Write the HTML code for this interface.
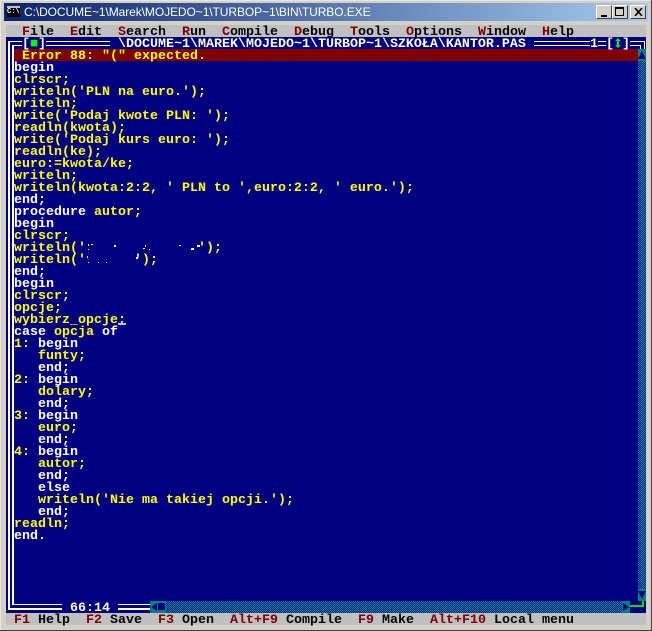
<!DOCTYPE html>
<html><head><meta charset="utf-8"><style>
html,body{margin:0;padding:0;background:#d4d0c8}
body{width:652px;height:631px;position:relative;overflow:hidden}
.a{position:absolute}
pre{position:absolute;margin:0;font:bold 13.34px/12px "Liberation Mono",monospace;white-space:pre;height:12px;transform:translateY(2px)}
#code{left:14px;top:61px;color:#ff0;height:auto}
#code b{color:#fff;font-weight:bold}
i{font-style:normal;color:#800000}
.l{position:absolute;background:#fff}
.btn{position:absolute;top:5px;width:16px;height:14px;background:#d4d0c8;box-sizing:border-box;border:1px solid;border-color:#fff #404040 #404040 #fff}
</style></head><body>
<div class="a" style="left:0;top:0;width:652px;height:631px;background:#d4d0c8"></div>
<div class="a" style="left:0;top:0;width:652px;height:1px;background:#e8e6e0"></div>
<div class="a" style="left:0;top:0;width:1px;height:631px;background:#e8e6e0"></div>
<div class="a" style="left:651px;top:0;width:1px;height:631px;background:#404040"></div>
<div class="a" style="left:0;top:630px;width:652px;height:1px;background:#404040"></div>
<div class="a" style="left:4px;top:3px;width:644px;height:18px;background:linear-gradient(90deg,#0a246a,#a6caf0)"></div>
<div class="a" style="left:7px;top:6px;width:13px;height:11px;background:#000;border-top:2px solid #c0c0c0;box-sizing:border-box;color:#fff;font:bold 7px/8px 'Liberation Mono',monospace;overflow:hidden">C:\</div>
<div class="a" style="left:24px;top:4px;color:#fff;font:12px/16px 'Liberation Sans',sans-serif;white-space:pre;letter-spacing:-0.08px">C:\DOCUME~1\Marek\MOJEDO~1\TURBOP~1\BIN\TURBO.EXE</div>
<div class="btn" style="left:596px"><div class="a" style="left:4px;top:9px;width:6px;height:2px;background:#000"></div></div>
<div class="btn" style="left:612px"><div class="a" style="left:2px;top:1px;width:9px;height:9px;border:1px solid #000;border-top-width:2px;box-sizing:border-box"></div></div>
<div class="btn" style="left:630px"><svg class="a" style="left:3px;top:2px" width="9" height="8"><path d="M1 0L8 8M8 0L1 8" stroke="#000" stroke-width="1.6"/></svg></div>

<div class="a" style="left:6px;top:25px;width:640px;height:12px;background:#c0c0c0"></div>
<pre style="left:6px;top:25px;color:#000">  <i>F</i>ile  <i>E</i>dit  <i>S</i>earch  <i>R</i>un  <i>C</i>ompile  <i>D</i>ebug  <i>T</i>ools  <i>O</i>ptions  <i>W</i>indow  <i>H</i>elp</pre>

<div class="a" style="left:6px;top:37px;width:640px;height:576px;background:#000080"></div>
<div class="a" style="left:14px;top:49px;width:624px;height:12px;background:#800000"></div>
<pre style="left:22px;top:49px;color:#ff0">Error 88: "(" expected.</pre>

<!-- frame -->
<div class="l" style="left:8px;top:41px;width:14px;height:1px"></div>
<div class="l" style="left:12px;top:45px;width:10px;height:1px"></div>
<div class="l" style="left:46px;top:41px;width:64px;height:1px"></div>
<div class="l" style="left:46px;top:45px;width:64px;height:1px"></div>
<div class="l" style="left:534px;top:41px;width:56px;height:1px"></div>
<div class="l" style="left:534px;top:45px;width:56px;height:1px"></div>
<div class="l" style="left:598px;top:41px;width:8px;height:1px"></div>
<div class="l" style="left:598px;top:45px;width:8px;height:1px"></div>
<div class="l" style="left:630px;top:41px;width:15px;height:1px"></div>
<div class="l" style="left:630px;top:45px;width:11px;height:1px"></div>
<div class="l" style="left:640px;top:45px;width:1px;height:4px"></div>
<div class="l" style="left:644px;top:41px;width:1px;height:8px"></div>
<div class="l" style="left:8px;top:41px;width:2px;height:568px"></div>
<div class="l" style="left:12px;top:45px;width:2px;height:559px"></div>
<div class="l" style="left:8px;top:608px;width:54px;height:2px"></div>
<div class="l" style="left:12px;top:604px;width:50px;height:1px"></div>
<div class="l" style="left:118px;top:604px;width:32px;height:1px"></div>
<div class="l" style="left:118px;top:608px;width:32px;height:2px"></div>
<pre style="left:22px;top:37px;color:#fff">[<span style="color:#0f0">■</span>]</pre>
<pre style="left:118px;top:37px;color:#fff">\DOCUME~1\MAREK\MOJEDO~1\TURBOP~1\SZKOŁA\KANTOR.PAS</pre>
<pre style="left:590px;top:37px;color:#fff">1</pre>
<pre style="left:606px;top:37px;color:#fff">[ ]</pre>
<svg class="a" style="left:614px;top:37px" width="8" height="12"><path d="M4 1L7 4H5V8H7L4 11L1 8H3V4H1Z" fill="#00e040"/></svg>
<pre style="left:70px;top:601px;color:#fff">66:14</pre>

<!-- scrollbars -->
<svg class="a" style="left:0;top:0" width="652" height="631" shape-rendering="crispEdges">
<defs><pattern id="p" width="2" height="2" patternUnits="userSpaceOnUse"><rect width="2" height="2" fill="#002090"/><rect width="1" height="1" fill="#008090"/><rect x="1" y="1" width="1" height="1" fill="#008090"/></pattern></defs>
<rect x="638" y="49" width="8" height="552" fill="url(#p)"/>
<rect x="150" y="601" width="480" height="12" fill="url(#p)"/>
</svg>
<div class="a" style="left:638px;top:49px;width:8px;height:12px;background:#008080"></div>
<svg class="a" style="left:638px;top:49px" width="8" height="12"><path d="M4 2L8 10H0Z" fill="#000080"/></svg>
<div class="a" style="left:638px;top:589px;width:8px;height:12px;background:#008080"></div>
<svg class="a" style="left:638px;top:589px" width="8" height="12"><path d="M0 2H8L4 10Z" fill="#000080"/></svg>
<div class="a" style="left:150px;top:601px;width:16px;height:12px;background:#008080"></div>
<svg class="a" style="left:150px;top:601px" width="8" height="12"><path d="M7 2V10L1 6Z" fill="#000080"/></svg>
<div class="a" style="left:158px;top:603px;width:7px;height:7px;background:#000080"></div>
<div class="a" style="left:622px;top:601px;width:8px;height:12px;background:#008080"></div>
<svg class="a" style="left:622px;top:601px" width="8" height="12"><path d="M1 2V10L7 6Z" fill="#000080"/></svg>
<div class="a" style="left:630px;top:601px;width:16px;height:12px;background:#000080"></div>
<div class="a" style="left:630px;top:605px;width:14px;height:2px;background:#00e000"></div>
<div class="a" style="left:642px;top:601px;width:2px;height:6px;background:#00e000"></div>

<pre id="code" style="height:auto"><b>begin</b>
clrscr;
writeln('PLN na euro.');
writeln;
write('Podaj kwote PLN: ');
readln(kwota);
write('Podaj kurs euro: ');
readln(ke);
euro:=kwota/ke;
writeln;
writeln(kwota:2:2, ' PLN to ',euro:2:2, ' euro.');
<b>end;</b>
<b>procedure</b> autor;
<b>begin</b>
clrscr;
writeln('              ');
writeln('      ');
<b>end;</b>
<b>begin</b>
clrscr;
opcje;
wybierz_opcje;
<b>case</b> opcja <b>of</b>
1: <b>begin</b>
   funty;
   <b>end;</b>
2: <b>begin</b>
   dolary;
   <b>end;</b>
3: <b>begin</b>
   euro;
   <b>end;</b>
4: <b>begin</b>
   autor;
   <b>end;</b>
   <b>else</b>
   writeln('Nie ma takiej opcji.');
   <b>end;</b>
readln;
<b>end.</b></pre>
<div class="a" style="left:118px;top:323px;width:8px;height:2px;background:#c0c0c0"></div>
<svg class="a" style="left:85px;top:241px" width="125" height="24" fill="#fff">
<rect x="3" y="3" width="1" height="2"/><rect x="6" y="3" width="2" height="1"/><rect x="3" y="8" width="1" height="1"/>
<rect x="29" y="4" width="2" height="2"/><rect x="58" y="7" width="2" height="1"/><rect x="60" y="4" width="1" height="2"/>
<rect x="64" y="8" width="1" height="1"/><rect x="94" y="4" width="2" height="1"/><rect x="106" y="7" width="3" height="2"/><rect x="112" y="4" width="3" height="2"/>
<rect x="2" y="15" width="1" height="2"/><rect x="3" y="21" width="1" height="1"/><rect x="13" y="21" width="1" height="1"/><rect x="21" y="21" width="1" height="1"/><rect x="51" y="16" width="2" height="2"/>
</svg>

<div class="a" style="left:6px;top:613px;width:640px;height:12px;background:#c0c0c0"></div>
<pre style="left:6px;top:613px;color:#000"> <i>F1</i> Help  <i>F2</i> Save  <i>F3</i> Open  <i>Alt+F9</i> Compile  <i>F9</i> Make  <i>Alt+F10</i> Local menu</pre>
</body></html>
